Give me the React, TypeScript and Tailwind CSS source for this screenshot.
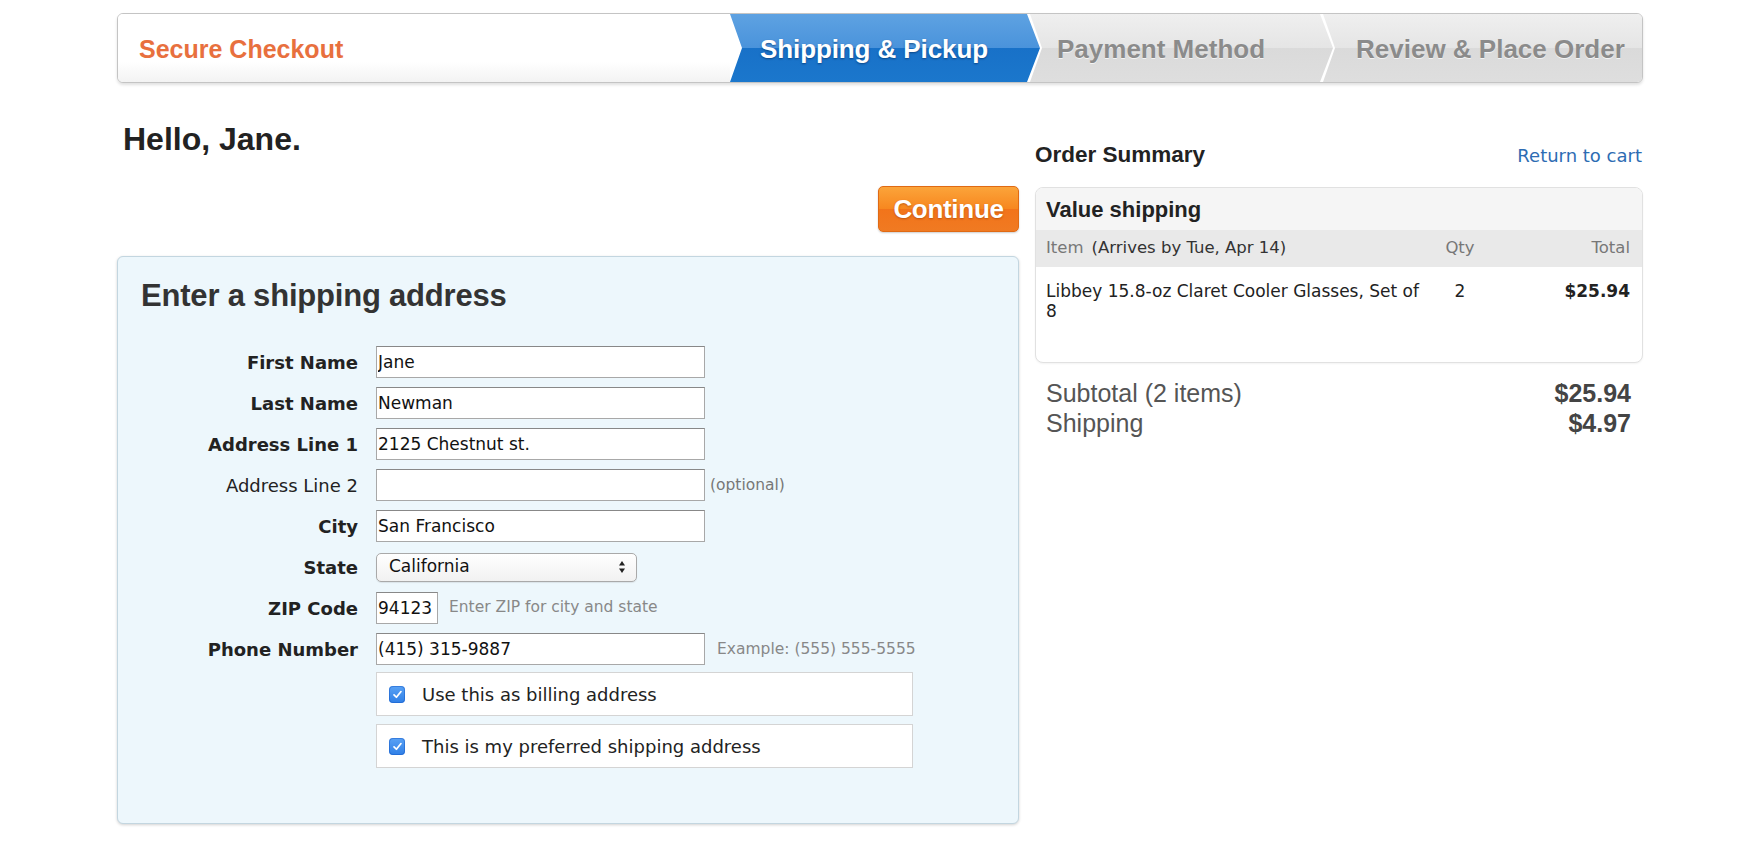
import React from 'react';

const verdana = "font-['DejaVu_Sans',Verdana,sans-serif]";

function StepBar() {
  return (
    <div className="flex h-[70px] overflow-hidden rounded-[6px] border border-[#c4c4c4] bg-white shadow-[0_2px_3px_rgba(0,0,0,0.12)]">
      {/* Brand segment */}
      <div className="flex w-[612px] items-center bg-[linear-gradient(to_bottom,#ffffff,#ffffff_70%,#f3f3f3)] pl-[21px] pt-[4px]">
        <span className="text-[25px] font-bold text-[#e8703e]">Secure Checkout</span>
      </div>

      {/* Active step */}
      <div className="flex w-[310px] items-center bg-[linear-gradient(to_bottom,#5ea2e2,#4a93db_50%,#1871c8_50%,#1b77cc)] pl-[30px] pt-[2px] [clip-path:polygon(0_0,calc(100%_-_13px)_0,100%_50%,calc(100%_-_13px)_100%,0_100%,12px_50%)]">
        <span className="text-[26px] font-bold tracking-[-0.1px] text-white [text-shadow:0_1px_2px_rgba(0,40,90,0.6)]">
          Shipping &amp; Pickup
        </span>
      </div>

      <div className="-ml-[10px] flex w-[303px] items-center bg-[linear-gradient(to_bottom,#efefef,#e5e5e5_50%,#dadada_50%,#dedede)] pl-[27px] pt-[2px] [clip-path:polygon(0_0,calc(100%_-_13px)_0,100%_50%,calc(100%_-_13px)_100%,0_100%,12px_50%)]">
        <span className="text-[26px] font-bold text-[#8b8b8b] [text-shadow:0_1px_0_rgba(255,255,255,0.7)]">Payment Method</span>
      </div>

      <div className="-ml-[10px] flex flex-1 items-center bg-[linear-gradient(to_bottom,#efefef,#e5e5e5_50%,#dadada_50%,#dedede)] pl-[33px] pt-[2px] [clip-path:polygon(0_0,100%_0,100%_100%,0_100%,12px_50%)]">
        <span className="text-[26px] font-bold text-[#8b8b8b] [text-shadow:0_1px_0_rgba(255,255,255,0.7)]">
          Review &amp; Place Order
        </span>
      </div>
    </div>
  );
}

interface RowProps {
  label: string;
  bold?: boolean;
  children: React.ReactNode;
}

function FormRow({ label, bold = true, children }: RowProps) {
  return (
    <div className="flex h-[32px] items-center">
      <label
        className={`w-[218px] pr-[1px] text-right text-[18px] text-[#222] ${verdana} ${
          bold ? 'font-bold' : 'font-normal'
        }`}
      >
        {label}
      </label>
      <div className="ml-[17px] flex items-center">{children}</div>
    </div>
  );
}

const inputCls =
  "h-[32px] border border-[#a8a8a8] border-t-[#888888] bg-white pl-[1px] text-[17px] text-[#111] outline-none font-['DejaVu_Sans',Verdana,sans-serif]";

function Checkbox({ label }: { label: string }) {
  return (
    <div className="flex h-[44px] w-[537px] items-center border border-[#d4d4d4] bg-white pl-[12px]">
      <div className="flex h-[17px] w-[16px] items-center justify-center rounded-[4px] bg-[linear-gradient(to_bottom,#5aa2f5,#2f7fe6)] shadow-[inset_0_0_0_1px_rgba(20,90,200,0.5)]">
        <svg viewBox="0 0 12 12" className="h-[11px] w-[11px]">
          <path d="M2.2 6.4 L4.8 9 L9.8 2.8" fill="none" stroke="white" strokeWidth="1.9" strokeLinecap="round" strokeLinejoin="round" />
        </svg>
      </div>
      <span className={`ml-[17px] text-[18px] text-[#222] ${verdana}`}>{label}</span>
    </div>
  );
}

function ShippingForm() {
  return (
    <div className="mt-[24px] h-[568px] rounded-[6px] border border-[#c3d6e0] bg-[#edf7fc] px-[23px] pt-[21px] shadow-[0_1px_3px_rgba(0,0,0,0.18)]">
      <h2 className="text-[31px] font-bold leading-[36px] tracking-[-0.2px] text-[#333]">Enter a shipping address</h2>

      <div className="mt-[32px] flex flex-col gap-[9px]">
        <FormRow label="First Name">
          <input readOnly defaultValue="Jane" className={`w-[329px] ${inputCls}`} />
        </FormRow>
        <FormRow label="Last Name">
          <input readOnly defaultValue="Newman" className={`w-[329px] ${inputCls}`} />
        </FormRow>
        <FormRow label="Address Line 1">
          <input readOnly defaultValue="2125 Chestnut st." className={`w-[329px] ${inputCls}`} />
        </FormRow>
        <FormRow label="Address Line 2" bold={false}>
          <input readOnly defaultValue="" className={`w-[329px] ${inputCls}`} />
          <span className={`ml-[5px] mt-[2px] text-[15.5px] text-[#777] ${verdana}`}>(optional)</span>
        </FormRow>
        <FormRow label="City">
          <input readOnly defaultValue="San Francisco" className={`w-[329px] ${inputCls}`} />
        </FormRow>
        <FormRow label="State">
          <div className="flex h-[29px] w-[261px] items-center justify-between rounded-[5px] border border-[#a9a9a9] bg-[linear-gradient(to_bottom,#ffffff,#f1f1f1)] pl-[12px] pr-[10px] shadow-[0_1px_1px_rgba(0,0,0,0.08)]">
            <span className={`text-[17px] text-[#111] ${verdana}`}>California</span>
            <svg viewBox="0 0 8 14" className="h-[14px] w-[8px]">
              <path d="M4 1 L7 5.5 H1 Z" fill="#222" />
              <path d="M4 13 L7 8.5 H1 Z" fill="#222" />
            </svg>
          </div>
        </FormRow>
        <FormRow label="ZIP Code">
          <input readOnly defaultValue="94123" className={`w-[62px] ${inputCls}`} />
          <span className={`ml-[11px] text-[15.5px] text-[#888] ${verdana}`}>Enter ZIP for city and state</span>
        </FormRow>
        <FormRow label="Phone Number">
          <input readOnly defaultValue="(415) 315-9887" className={`w-[329px] ${inputCls}`} />
          <span className={`ml-[12px] mt-[2px] text-[15.5px] text-[#888] ${verdana}`}>Example: (555) 555-5555</span>
        </FormRow>
      </div>

      <div className="ml-[235px] mt-[7px] flex flex-col gap-[8px]">
        <Checkbox label="Use this as billing address" />
        <Checkbox label="This is my preferred shipping address" />
      </div>
    </div>
  );
}

function OrderSummary() {
  return (
    <div className="flex w-[608px] flex-col">
      <div className="mt-[58px] flex h-[28px] items-center justify-between">
        <h3 className="text-[22.5px] font-bold text-[#222]">Order Summary</h3>
        <a className={`pr-[1px] text-[18px] text-[#2d6cb3] ${verdana}`}>Return to cart</a>
      </div>

      <div className="mt-[18px] h-[176px] overflow-hidden rounded-[8px] border border-[#e1e1e1] bg-white shadow-[0_1px_2px_rgba(0,0,0,0.05)]">
        <div className="flex h-[42px] items-center bg-[#f5f5f5] pl-[10px]">
          <span className="text-[22px] font-bold text-[#222]">Value shipping</span>
        </div>
        <div className={`flex h-[37px] items-center bg-[#e9e9e9] pl-[10px] pr-[12px] text-[16.5px] ${verdana}`}>
          <div className="w-[398px]">
            <span className="text-[#777]">Item</span>
            <span className="ml-[8px] text-[#333]">(Arrives by Tue, Apr 14)</span>
          </div>
          <div className="w-[32px] text-center text-[#777]">Qty</div>
          <div className="flex-1 text-right text-[#777]">Total</div>
        </div>
        <div className={`flex pl-[10px] pr-[12px] pt-[14px] text-[17px] leading-[20px] text-[#222] ${verdana}`}>
          <div className="w-[398px]">
            <div className="w-[384px]">Libbey 15.8-oz Claret Cooler Glasses, Set of 8</div>
          </div>
          <div className="w-[32px] text-center">2</div>
          <div className="flex-1 text-right font-bold">$25.94</div>
        </div>
      </div>

      <div className="mt-[15px] flex flex-col pl-[11px] pr-[12px] text-[25px] leading-[30px]">
        <div className="flex justify-between">
          <span className="text-[#555]">Subtotal (2 items)</span>
          <span className="font-bold text-[#444]">$25.94</span>
        </div>
        <div className="flex justify-between">
          <span className="text-[#555]">Shipping</span>
          <span className="font-bold text-[#444]">$4.97</span>
        </div>
      </div>
    </div>
  );
}

export default function App() {
  return (
    <div className="min-h-screen bg-white font-['Liberation_Sans',Arial,sans-serif] text-[#222]">
      <div className="mx-auto w-[1526px] pt-[13px]">
        <StepBar />

        <div className="flex gap-[16px]">
          <div className="flex w-[902px] flex-col">
            <h1 className="mt-[38px] pl-[6px] text-[32px] font-bold leading-[36px] text-[#222]">Hello, Jane.</h1>

            <button className="mt-[29px] flex h-[46px] w-[141px] items-center justify-center self-end rounded-[5px] border border-[#e06a14] bg-[linear-gradient(to_bottom,#fba43a,#f7871f_50%,#f2741a_50%,#f07a22)] shadow-[0_1px_2px_rgba(0,0,0,0.2)]">
              <span className="text-[26px] font-bold tracking-[-0.3px] text-white [text-shadow:0_1px_2px_rgba(160,60,0,0.6)]">
                Continue
              </span>
            </button>

            <ShippingForm />
          </div>

          <OrderSummary />
        </div>
      </div>
    </div>
  );
}
